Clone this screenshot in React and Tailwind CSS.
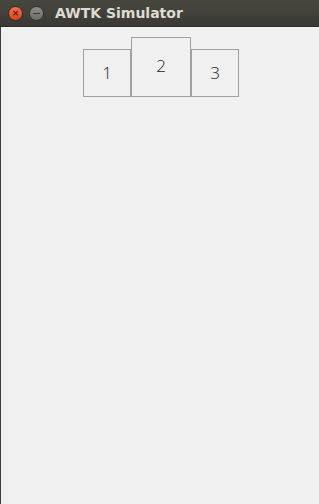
export default function App() {
  return (
    <div className="w-[319px] h-[504px] flex flex-col bg-[#f0f0f0] overflow-hidden">
      {/* title bar */}
      <div className="h-[27px] flex items-center bg-gradient-to-b from-[#48473f] to-[#3a3935] border-b border-[#2b2a26]">
        <div className="ml-[8px] w-[15px] h-[15px] rounded-full bg-gradient-to-b from-[#f2704a] to-[#d9451b] border border-[#3a2a20] flex items-center justify-center text-[9px] leading-none text-[#5a1e0e] font-bold" style={{ fontFamily: '"DejaVu Sans", sans-serif' }}>
          ×
        </div>
        <div className="ml-[6px] w-[15px] h-[15px] rounded-full bg-gradient-to-b from-[#8e8d88] to-[#6e6d68] border border-[#33322e] flex items-center justify-center">
          <div className="w-[7px] h-[1px] bg-[#3d3c38]" />
        </div>
        <span
          className="ml-[11px] text-[14px] font-bold text-[#dfdbd2]"
          style={{ fontFamily: '"DejaVu Sans", sans-serif' }}
        >
          AWTK Simulator
        </span>
      </div>

      {/* content */}
      <div className="flex-1 border-l border-[#3b3b3b]">
        <div
          className="flex items-end pl-[82px] pt-[10px] text-[#222] font-light"
          style={{ fontFamily: '"Open Sans", sans-serif' }}
        >
          <div className="w-[48px] h-[48px] border border-[#a0a0a0] flex items-center justify-center text-[17px]">
            1
          </div>
          <div className="w-[60px] h-[60px] border border-[#a0a0a0] flex items-center justify-center text-[17px] pb-[2px]">
            2
          </div>
          <div className="w-[48px] h-[48px] border border-[#a0a0a0] flex items-center justify-center text-[17px]">
            3
          </div>
        </div>
      </div>
    </div>
  );
}
